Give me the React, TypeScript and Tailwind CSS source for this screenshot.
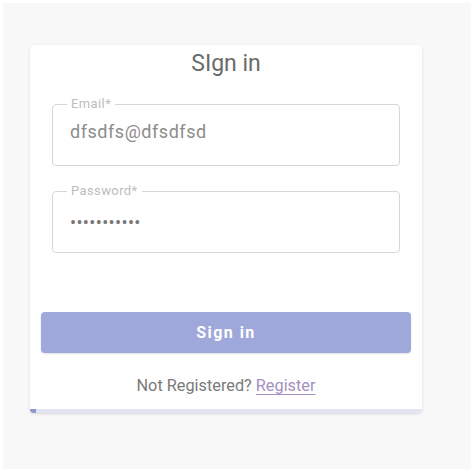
import React from 'react';

const font = { fontFamily: 'Roboto, "Noto Sans", Arial, sans-serif' };

function OutlinedField({ label, children }: { label: string; children: React.ReactNode }) {
  return (
    <div className="relative h-[62px] rounded-[4px] border border-[#d6d6d6]">
      {/* notched label over the top border */}
      <span className="absolute -top-[9px] left-[14px] bg-white px-[4px] text-[13px] leading-[16px] tracking-[0.03em] text-[#bdbdbd]">
        {label}
      </span>
      {children}
    </div>
  );
}

export default function App() {
  return (
    <div className="h-[473px] w-[474px] bg-white p-[3px]" style={font}>
      <div className="h-[466px] w-[468px] bg-[#f8f8f8] pl-[27px] pt-[42px]">
        <div className="flex h-[368px] w-[392px] flex-col overflow-hidden rounded-[4px] bg-white shadow-[0_1px_3px_rgba(0,0,0,0.12)]">
          <h1 className="pt-[3px] text-center text-[23px] font-normal leading-[32px] text-[#6a6a6a]">SIgn in</h1>

          <div className="mt-[24px] px-[22px]">
            <OutlinedField label="Email*">
              <div className="pl-[17px] pt-[15px] text-[18px] leading-[24px] tracking-[0.03em] text-[#8c8c8c]">
                dfsdfs@dfsdfsd
              </div>
            </OutlinedField>
          </div>

          <div className="mt-[25px] px-[22px]">
            <OutlinedField label="Password*">
              <div className="pl-[17px] pt-[19px] text-[18px] leading-[24px] tracking-[0.02em] text-[#777777]">
                •••••••••••
              </div>
            </OutlinedField>
          </div>

          <div className="mt-[59px] px-[11px]">
            <button className="h-[41px] w-full rounded-[4px] bg-[#9fa8da] text-[16px] font-bold tracking-[0.09em] text-white shadow-[0_1px_2px_rgba(0,0,0,0.12)]">
              Sign in
            </button>
          </div>

          <p className="mt-[21px] text-center text-[16.3px] leading-[24px] text-[#7a7a7a]">
            Not Registered?{' '}
            <a href="#" className="text-[#a58fbf] underline decoration-[#a58fbf] underline-offset-[3px]">
              Register
            </a>
          </p>

          <div className="mt-auto flex h-[4px] w-full bg-[#e2e4f4]">
            <div className="h-full w-[6px] bg-[#8e95c9]" />
          </div>
        </div>
      </div>
    </div>
  );
}
